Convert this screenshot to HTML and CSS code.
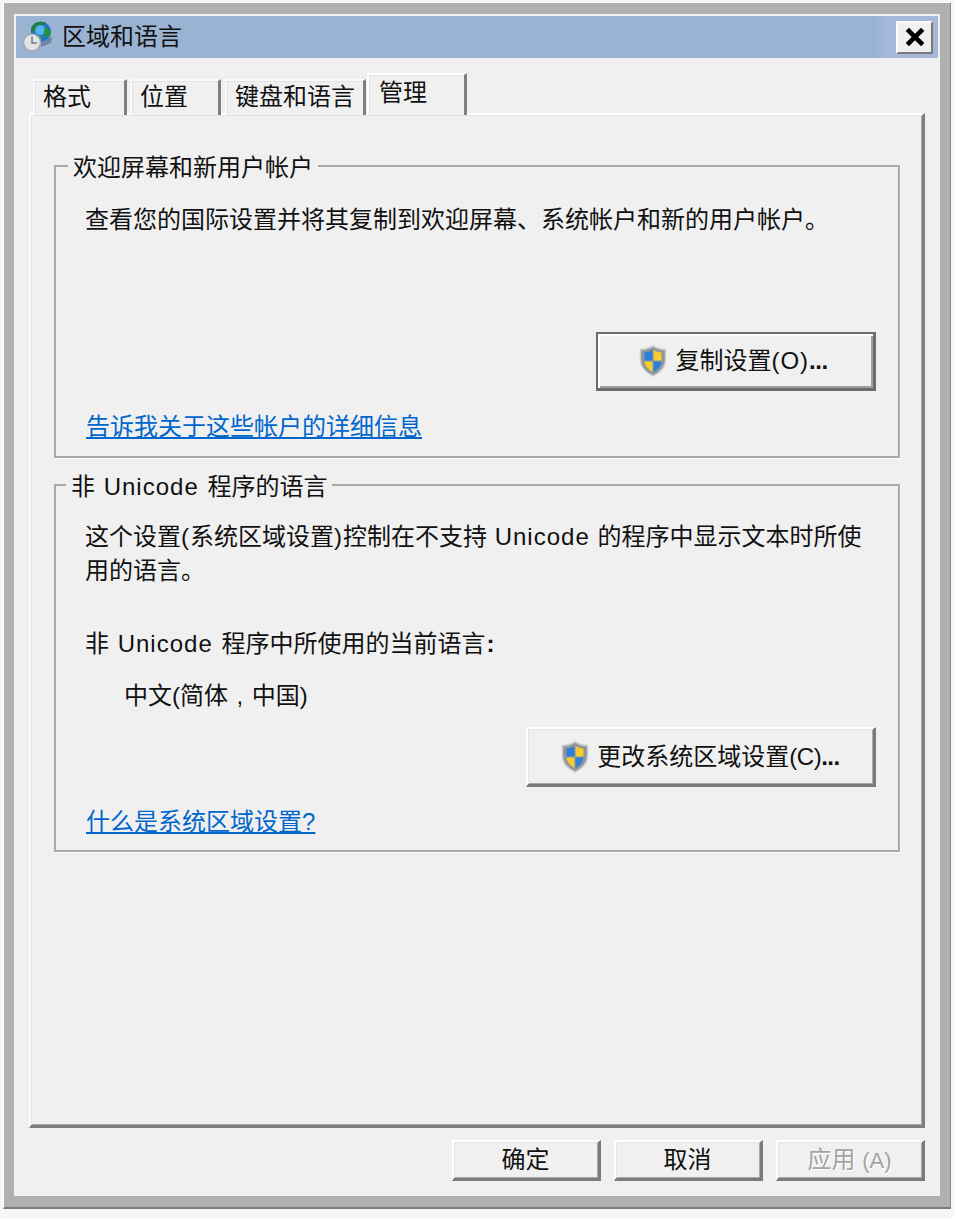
FILE: index.html
```html
<!DOCTYPE html>
<html lang="zh-CN">
<head>
<meta charset="utf-8">
<title>区域和语言</title>
<link rel="stylesheet" href="styles.css">
</head>
<body>
<svg class="defs" width="0" height="0" aria-hidden="true">
  <defs>
    <symbol id="shield" viewBox="0 0 28 32">
      <path d="M14 1 C10 3.500 6 4.500 1.500 4.500 L1.500 15 C1.500 23 8 28 14 31 C20 28 26.500 23 26.500 15 L26.500 4.500 C22 4.500 18 3.500 14 1Z" fill="#8f9599" stroke="#c9cccf" stroke-width="1.500"/>
      <path d="M13.500 5 C11 6.500 8.500 7.200 5.500 7.400 L5.500 15.500 L13.500 15.500Z" fill="#2b80dc"/>
      <path d="M14.500 5 C17 6.500 19.500 7.200 22.500 7.400 L22.500 15.500 L14.500 15.500Z" fill="#f7cc30"/>
      <path d="M5.500 16.500 L13.500 16.500 L13.500 27 C9 24.500 6 21 5.500 16.500Z" fill="#f7cc30"/>
      <path d="M22.500 16.500 L14.500 16.500 L14.500 27 C19 24.500 22 21 22.500 16.500Z" fill="#2b80dc"/>
    </symbol>
  </defs>
</svg>
<div class="frame">
  <div class="dialog">
    <header class="titlebar">
      <svg class="app-icon" viewBox="0 0 32 32" aria-hidden="true">
        <path d="M16 19 L30 16 L29 22 L19 26Z" fill="#6d86a8"/>
        <circle cx="19" cy="10.500" r="10" fill="#1f78cf"/>
        <circle cx="18" cy="9" r="5" fill="#55b4ee"/>
        <path d="M11 4 C14 0 22 0 25 3 C22 5 19 3 15 5 C13 7 13 11 10 13 C8 10 9 6 11 4Z" fill="#1f7f4a"/>
        <path d="M24 6 C28 8 30 12 28 15 C25 18 22 15 22 12 C22 9 22 8 24 6Z" fill="#23913c"/>
        <path d="M13 15 C16 14 18 16 21 15 C20 18 16 20 13 18Z" fill="#2f9e3f"/>
        <circle cx="10" cy="21.500" r="8.500" fill="#e2e4e6" stroke="#a4a8ac" stroke-width="1.500"/>
        <path d="M10 15.500 L10 22 L15 22" fill="none" stroke="#74787c" stroke-width="1.500"/>
      </svg>
      <h1 class="title">区域和语言</h1>
      <button class="close" aria-label="关闭">
        <svg viewBox="0 0 20 20" aria-hidden="true"><path d="M3 3 L17 17 M17 3 L3 17" stroke="#000" stroke-width="4.200" fill="none"/></svg>
      </button>
    </header>
    <main class="main">
      <nav class="tabs">
        <div class="tab tab-format">格式</div>
        <div class="tab tab-location">位置</div>
        <div class="tab tab-keyboard">键盘和语言</div>
        <div class="tab tab-active">管理</div>
      </nav>
      <section class="panel">
        <fieldset class="group group-welcome">
          <legend class="legend legend-welcome">欢迎屏幕和新用户帐户</legend>
          <div class="group-body">
            <p class="line">查看您的国际设置并将其复制到欢迎屏幕、系统帐户和新的用户帐户。</p>
            <div class="actions actions-copy">
              <button class="btn btn-default btn-copy"><svg class="shield"><use href="#shield"/></svg><span>复制设置<span class="lat">(O)</span><span class="dots">...</span></span></button>
            </div>
            <a class="link" href="#">告诉我关于这些帐户的详细信息</a>
          </div>
        </fieldset>
        <fieldset class="group group-lang">
          <legend class="legend legend-lang">非 <span class="lat">Unicode</span> 程序的语言</legend>
          <div class="group-body">
            <p class="line first-lang">这个设置<span class="paren">(</span>系统区域设置<span class="paren">)</span>控制在不支持 <span class="lat">Unicode</span> 的程序中显示文本时所使用的语言。</p>
            <p class="line current-label">非 <span class="lat">Unicode</span> 程序中所使用的当前语言<span class="colon">:</span></p>
            <p class="line current-value">中文(简体<span class="comma">,</span>中国)</p>
            <div class="actions actions-change">
              <button class="btn btn-change"><svg class="shield"><use href="#shield"/></svg><span>更改系统区域设置<span class="lat-tight">(C)</span><span class="dots">...</span></span></button>
            </div>
            <a class="link link-lang" href="#">什么是系统区域设置?</a>
          </div>
        </fieldset>
      </section>
      <footer class="footer">
        <button class="btn btn-foot">确定</button>
        <button class="btn btn-foot">取消</button>
        <button class="btn btn-foot btn-disabled"><span>应用 <span class="accel">(A)</span></span></button>
      </footer>
    </main>
  </div>
</div>
</body>
</html>
```
FILE: styles.css
```css
* { box-sizing: border-box; }
html, body { margin: 0; height: 1218px; overflow: hidden; }
body {
  background: #f6f6f6;
  padding: 2px 3px 9px;
  font-family: "Liberation Sans", "Noto Sans CJK SC", sans-serif;
  font-size: 24px;
  line-height: 34px;
  color: #111;
}
.defs { position: absolute; }
.frame {
  height: 100%;
  background: #b0b0b0;
  border-top: 1px solid #fff;
  border-left: 1px solid #fff;
  border-bottom: 2px solid #7d7d7d;
  border-right: 1px solid #8a8a8a;
  padding: 11px 10px 11px 10px;
}
.dialog {
  height: 100%;
  background: #f0f0f0;
  padding: 2px;
  display: flex;
  flex-direction: column;
}
.titlebar {
  height: 42px;
  flex: none;
  display: flex;
  align-items: center;
  background: linear-gradient(90deg, #9ab3d3 93%, #a5b8dc 95%);
  padding: 0 5px 0 6px;
}
.app-icon { width: 32px; height: 32px; flex: none; }
.title { margin: 0 0 0 8px; font-size: 24px; font-weight: 400; line-height: 34px; flex: 1; }
.close {
  width: 37px;
  height: 33px;
  padding: 0;
  display: flex;
  align-items: center;
  justify-content: center;
  background: #f0f0f0;
  border: 2px solid;
  border-color: #fff #7b7b7b #7b7b7b #fff;
}
.close svg { width: 22px; height: 22px; display: block; }
.main {
  flex: 1;
  display: flex;
  flex-direction: column;
  padding: 15px 13px 13px;
}
.tabs {
  height: 42px;
  flex: none;
  display: flex;
  align-items: flex-end;
  padding-left: 4px;
  margin-bottom: -2px;
}
.tab {
  position: relative;
  background: #f0f0f0;
  height: 36px;
  border-top: 2px solid #fafafa;
  border-left: 2px solid #fafafa;
  border-right: 3px solid #7f7f7f;
  padding-left: 8px;
  line-height: 32px;
  white-space: nowrap;
  box-shadow: inset 1px 1px 0 #e3e3e3;
}
.tab-format { width: 94px; margin-right: 3px; }
.tab-location { width: 91px; margin-right: 4px; }
.tab-keyboard { width: 141px; margin-right: 1px; }
.tab-active {
  width: 100px;
  height: 42px;
  z-index: 1;
  padding-left: 10px;
  line-height: 36px;
  border-top-color: #fff;
  border-left-color: #fff;
}
.panel {
  flex: 1;
  background: #f0f0f0;
  border-top: 2px solid #fff;
  border-left: 2px solid #fafafa;
  border-right: 3px solid #7f7f7f;
  border-bottom: 3px solid #7f7f7f;
  padding: 32px 22px 0 23px;
  box-shadow: inset 1px 1px 0 #e3e3e3, inset -1px -1px 0 #a8a8a8;
}
.group {
  margin: 0;
  padding: 0;
  min-width: 0;
  border: 2px solid #a9a9a9;
  box-shadow: 1px 1px 0 #fff;
}
.group-lang { margin-top: 8px; }
.legend { padding: 4px 5px 0; line-height: 34px; white-space: nowrap; }
.legend-welcome { margin-left: 12px; }
.legend-lang { margin-left: 10px; word-spacing: 2px; }
.group-body { padding: 0 22px 0 29px; }
.group-welcome .group-body { padding-top: 18px; padding-bottom: 12px; }
.group-lang .group-body { padding-top: 16px; padding-bottom: 11px; }
.line { margin: 0; }
.lat { letter-spacing: 1px; }
.lat-tight { letter-spacing: -0.5px; }
.first-lang { word-spacing: 1px; }
.paren { letter-spacing: 1px; }
.current-label { margin-top: 39px; word-spacing: 2px; }
.colon { padding-left: 1px; font-weight: 700; }
.comma { padding: 0 8.5px; }
.current-value { margin-top: 18px; padding-left: 39px; }
.actions { display: flex; justify-content: flex-end; }
.actions-copy { margin-top: 95px; }
.actions-change { margin-top: 14px; }
.link { display: block; margin: 19px 0 0 1px; color: #0066cc; text-decoration: underline; }
.link-lang { margin-top: 18px; }
.btn {
  font: inherit;
  color: #111;
  padding: 0;
  display: flex;
  align-items: center;
  justify-content: center;
  background: #f0f0f0;
  border: 2px solid;
  border-color: #fff #7b7b7b #7b7b7b #fff;
  border-right-width: 3px;
  border-bottom-width: 3px;
  box-shadow: inset 1px 1px 0 #e3e3e3, inset -1px -1px 0 #a8a8a8;
}
.btn-default {
  border: 2px solid #6e6e6e;
  border-bottom-width: 3px;
  border-right-width: 3px;
  box-shadow: inset 2px 2px 0 #fff, inset -2px -2px 0 #a0a0a0;
}
.btn-copy { width: 280px; height: 59px; padding-right: 4px; }
.btn-change { width: 350px; height: 60px; }
.dots { font-weight: 700; letter-spacing: -0.5px; }
.shield { width: 28px; height: 32px; margin-right: 8px; flex: none; }
.footer {
  flex: none;
  display: flex;
  justify-content: flex-end;
  gap: 13px;
  margin-top: 12px;
}
.btn-foot { width: 149px; height: 41px; padding-right: 1px; }
.btn-disabled { color: #a3a3a3; text-shadow: 1px 1px 0 #fff; }
.accel { font-size: 22px; }
```
